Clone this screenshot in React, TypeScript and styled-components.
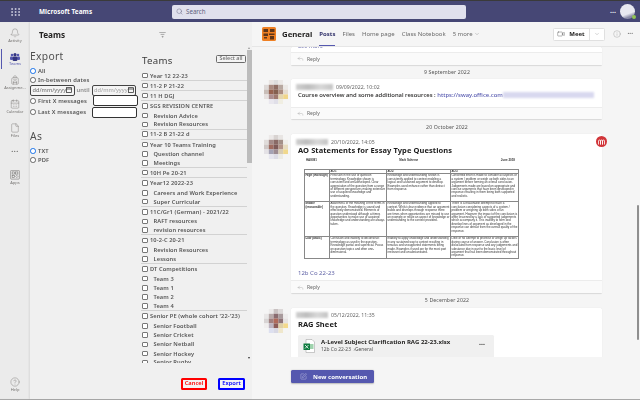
import React from "react";
import styled, { createGlobalStyle } from "styled-components";
import { Bell, CalendarDays, File, Search, Video, Info, ChevronDown, Reply, SquarePen, CircleHelp, Backpack } from "lucide-react";

const Global = createGlobalStyle`
  html, body { margin: 0; padding: 0; width: 640px; height: 400px; overflow: hidden; background: #f5f5f5; }
  #root { width: 640px; height: 400px; }
  * { box-sizing: border-box; }
  body { font-family: "Noto Sans", "Open Sans", sans-serif; color: #252423; }
`;

const Page = styled.div`
  width: 640px; height: 400px; display: flex; flex-direction: column;
  border-bottom: 1px solid #a8a8a8; filter: blur(.22px);
`;
const TitleBar = styled.header`
  height: 22px; flex: none; display: flex; align-items: center;
  background: #464775; border-top: 1px solid #3a3a3a; position: relative;
`;
const Waffle = styled.svg`width: 9px; height: 8px; margin-left: 11px; flex: none;`;
const Brand = styled.div`
  margin-left: 19px; width: 133px; color: #fff; font-size: 6.4px; font-weight: 700; letter-spacing: .05px;
`;
const SearchBox = styled.div`
  width: 294px; height: 14px; background: #e0e0ed; border-radius: 2px; display: flex; align-items: center;
  gap: 3px; padding-left: 4px; color: #63637f; font-size: 6.2px;
`;
const TitleDots = styled.div`
  margin-left: auto; margin-right: 4px; color: #fff; font-size: 7px; font-weight: 700; line-height: 1; margin-top: -3px;
`;
const UserAvatar = styled.div`
  width: 15px; height: 15px; border-radius: 50%; background: linear-gradient(160deg,#e8e8f0 0 62%,#8b8ca8 80%);
  margin-right: 5px; position: relative;
`;
const Presence = styled.span`
  position: absolute; right: -1px; bottom: 0; width: 4px; height: 4px; border-radius: 50%; background: #92c353;
`;

const Main = styled.div`flex: 1; min-height: 0; display: flex;`;

const Rail = styled.nav`
  width: 30px; flex: none; background: #ebebeb; display: flex; flex-direction: column; padding-top: 2px;
  box-shadow: inset -1px 0 2px rgba(0,0,0,.03);
`;
const RailItem = styled.div<{ $active?: boolean }>`
  height: 23.7px; flex: none; display: flex; flex-direction: column; align-items: center; justify-content: center;
  gap: 1px; position: relative; color: ${p => (p.$active ? "#5558af" : "#716f6d")};
  font-size: 4px; line-height: 4.5px; white-space: nowrap;
  ${p => p.$active && `&::before { content: ""; position: absolute; left: 1px; top: 1px; bottom: 2px; width: 1px; background: #5558af; }`}
`;
const RailSpacer = styled.div`flex: 1;`;
const RailHelp = styled(RailItem)`margin-bottom: 2px;`;
const RailDots = styled.div`font-size: 7px; font-weight: 700; color: #5f5e5c; letter-spacing: .5px; line-height: 1; margin-bottom: 9px;`;

const Panel = styled.aside`
  width: 222px; flex: none; background: #f0f0f0; display: flex; flex-direction: column; position: relative;
  box-shadow: -1px 0 2px rgba(0,0,0,.05);
`;
const PanelHead = styled.div`
  height: 25px; flex: none; display: flex; align-items: center; justify-content: space-between;
  padding: 0 86px 0 9px; font-size: 8.2px; font-weight: 700; color: #252423;
`;
const Exporter = styled.div`flex: 1; min-height: 0; display: flex; position: relative;`;
const OptionsCol = styled.div`width: 111px; flex: none; padding-top: 2px; color: #4d4d4d;`;
const BigHeading = styled.div`
  font-size: 10.3px; line-height: 14px; color: #505050; letter-spacing: .3px;
`;
const OptionRow = styled.label<{ $gap?: number }>`
  display: flex; align-items: center; height: 9.5px; font-size: 5.8px; font-weight: 600; color: #555;
  letter-spacing: .12px; margin-top: ${p => p.$gap ?? 0}px; white-space: nowrap; position: relative;
`;
const Radio = styled.span<{ $on?: boolean }>`
  width: 5.6px; height: 5.6px; border-radius: 50%; margin: 0 2px 0 .4px; flex: none; background: #fff;
  border: ${p => (p.$on ? "1.6px solid #1a73e8" : ".6px solid #666")};
`;
const DateLine = styled.div`
  display: flex; align-items: center; height: 10.5px; gap: 2px; font-size: 5.8px; color: #8a8a8a; font-weight: 600;
`;
const DateField = styled.div<{ $faint?: boolean }>`
  width: 44.5px; height: 10.5px; border: .7px solid #444; border-radius: 2px; display: flex; align-items: center;
  justify-content: space-between; padding: 0 1.5px; font-size: 5.6px; font-weight: 500; background: #f4f4f4;
  color: ${p => (p.$faint ? "#aaa" : "#777")};
`;
const CalIcon = styled.svg`width: 6px; height: 6px; flex: none;`;
const NumberField = styled.div<{ $left: number; $top: number }>`
  position: absolute; left: ${p => p.$left}px; top: ${p => p.$top}px; width: 44.5px; height: 11px;
  border: .8px solid #333; border-radius: 2px; background: #fff;
`;
const AsGap = styled.div`height: 12px;`;
const TeamsCol = styled.div`width: 106px; flex: none; display: flex; flex-direction: column; height: 316px;`;
const TeamsHead = styled.div`
  height: 24px; flex: none; display: flex; align-items: center; justify-content: space-between; padding-top: 3px;
`;
const SelectAll = styled.button`
  width: 30px; height: 8.5px; padding: 0; border: .7px solid #6b6b6b; border-radius: 1.5px; background: #f4f4f4;
  color: #777; font: 600 5.3px "Noto Sans", sans-serif; line-height: 1; margin-right: 1px; margin-top: -3px;
`;
const TeamsHeading = styled(BigHeading)`font-size: 9.6px; color: #3a3a3a; letter-spacing: .35px; padding-left: 1px;`;
const List = styled.div`flex: 1; min-height: 0; overflow: hidden;`;
const Line = styled.label<{ $rule?: boolean }>`
  display: flex; align-items: center; font-size: 5.7px; font-weight: 600; color: #555;
  letter-spacing: .1px; white-space: nowrap; border-bottom: ${p => (p.$rule ? ".7px solid #d2d2d2" : "none")};
`;
const TeamRow = styled(Line)`height: 10px;`;
const SubRow = styled(Line)`height: 9.3px;`;
const Box = styled.span<{ $sub?: boolean }>`
  width: 6px; height: 5.6px; border: .6px solid #777; border-radius: 1px; background: #fff; flex: none;
  margin: 0 ${p => (p.$sub ? 6 : 2.5)}px 0 .5px;
`;
const ScrollTrack = styled.div`
  width: 5px; flex: none; height: 316px; position: relative; background: #f0f0f0;
`;
const ScrollThumb = styled.div`position: absolute; top: 3px; left: 0; right: 0; height: 113px; background: #bcbcbc;`;
const Arrow = styled.span<{ $down?: boolean }>`
  position: absolute; left: .8px; ${p => (p.$down ? "top: 310px; border-top: 2px solid #333;" : "top: 0; border-bottom: 2px solid #999;")}
  border-left: 1.6px solid transparent; border-right: 1.6px solid transparent;
`;
const Actions = styled.div`
  position: absolute; right: 7px; bottom: 9px; display: flex; gap: 11px;
`;
const ActionButton = styled.button<{ $color: string; $w: number }>`
  width: ${p => p.$w}px; height: 12.5px; padding: 0; background: #f4f4f4; border: 2px solid ${p => p.$color};
  border-radius: 1.5px; color: ${p => p.$color}; font: 600 5.8px "Noto Sans", sans-serif; line-height: 1;
`;

const Chat = styled.section`flex: 1; min-width: 0; background: #f5f5f5; display: flex; flex-direction: column; position: relative;`;
const ChannelHead = styled.div`
  height: 25px; flex: none; display: flex; align-items: center; padding-left: 10px; position: relative;
  border-bottom: .5px solid #e6e6e6;
`;
const ChannelLogo = styled.svg`width: 14px; height: 14px; margin-right: 6px; flex: none;`;
const ChannelName = styled.div`font-size: 7.8px; font-weight: 700; margin-right: 7px;`;
const Tabs = styled.div`display: flex; align-items: center; height: 100%; gap: 7px; font-size: 6px; color: #6a6a6a;`;
const Tab = styled.div<{ $active?: boolean }>`
  height: 100%; display: flex; align-items: center; gap: 1px; position: relative;
  ${p => p.$active && `font-weight: 700; color: #33336b; &::after { content: ""; position: absolute; left: 0; right: 0; bottom: 0; height: 1px; background: #5558af; }`}
`;
const HeadRight = styled.div`margin-left: auto; display: flex; align-items: center; padding-right: 7px; color: #6a6a6a;`;
const MeetGroup = styled.div`
  width: 52px; height: 13px; display: flex; background: #fff; border: .5px solid #e0e0e0; border-radius: 1.5px;
  margin-right: 8px;
`;
const MeetMain = styled.div`
  flex: 1; display: flex; align-items: center; justify-content: center; gap: 4px; color: #252423; font-size: 6px; font-weight: 700;
  border-right: .5px solid #e0e0e0;
`;
const MeetCaret = styled.div`width: 14px; display: flex; align-items: center; justify-content: center; color: #777;`;
const HeadDots = styled.span`font-size: 6.5px; font-weight: 700; margin-left: 7px; line-height: 1; margin-top: -3px;`;

const Thread = styled.div`flex: 1; min-height: 0; overflow: hidden; display: flex; flex-direction: column;`;
const DateSep = styled.div<{ $h: number }>`
  height: ${p => p.$h}px; flex: none; display: flex; align-items: center; justify-content: center;
  width: 390px; font-size: 5.2px; color: #555; position: relative; letter-spacing: .1px;
`;
const MsgRow = styled.div`display: flex; flex: none; position: relative;`;
const AvatarSlot = styled.div<{ $top: number }>`width: 39px; flex: none; padding: ${p => p.$top}px 0 0 12px;`;
const Pixel = styled.svg`width: 24px; height: 24px; display: block; filter: blur(.7px);`;
const Card = styled.article`
  width: 311px; background: #fff; border-radius: 1.5px; box-shadow: 0 .5px 1px rgba(0,0,0,.12);
`;
const Clip = styled.div<{ $h: number }>`height: ${p => p.$h}px; overflow: hidden;`;
const SeeMore = styled.div`font-size: 5.6px; color: #6264a7; padding-left: 7px; margin-top: -5px; line-height: 8px; filter: blur(.2px);`;
const ReplyRow = styled.div`
  height: 12.5px; display: flex; align-items: center; gap: 3px; padding-left: 6px; font-size: 5px; color: #666;
  background: #fafafa; border-top: .5px solid #ececec;
`;
const Meta = styled.div`display: flex; align-items: center; height: 9px; margin-top: 3px; padding-left: 5px; gap: 3px;`;
const BlurName = styled.div<{ $w: number }>`
  width: ${p => p.$w}px; height: 6px; background: linear-gradient(90deg,#d0d0d0,#bdbdbd,#d8d8d8,#c4c4c4); filter: blur(.8px); flex: none;
`;
const Stamp = styled.div`font-size: 5.2px; color: #666;`;
const Body = styled.div`font-size: 5.9px; line-height: 8px; color: #252423; padding-left: 7px; height: 15.5px; white-space: nowrap; font-weight: 500;`;
const Link = styled.span`color: #5558af;`;
const BlurLink = styled.span`
  display: inline-block; width: 91px; height: 6px; background: #d8d8ef; filter: blur(1px); vertical-align: -1px;
`;
const Heading = styled.div`
  font-size: 7.5px; font-weight: 700; color: #1b1b1b; padding-left: 7px; line-height: 10px; white-space: nowrap; letter-spacing: .08px; margin-top: -1px;
`;
const Doc = styled.div`width: 215px; margin: 1px 0 0 13px; font-family: "Liberation Sans", Arial, sans-serif; font-size: 2.95px; line-height: 3.4px; color: #333;`;
const DocHead = styled.div`display: flex; justify-content: space-between; font-weight: 700; height: 9px; padding: 0 4px 0 2px; align-items: center; margin-bottom: 4px;`;
const DocTable = styled.table`
  width: 214px; height: 88px; border-collapse: collapse; table-layout: fixed;
  td, th { border: .5px solid #888; padding: 0 .5px; vertical-align: top; overflow: hidden; font-weight: 400; }
  th { font-weight: 700; height: 4px; text-align: left; }
  tbody tr:nth-child(1) { height: 28px; }
  tbody tr:nth-child(2) { height: 35px; }
  tbody tr:nth-child(3) { height: 21px; }
`;
const FirstCell = styled.td`&& { font-weight: 700; }`;
const ChannelRef = styled.div`font-size: 6px; color: #6264a7; padding: 11.5px 0 3px 7px; line-height: 7px; height: 21.5px;`;
const Badge = styled.div`
  position: absolute; left: 344px; top: 2px; width: 11px; height: 11px; border-radius: 50%; background: #d13438;
  display: flex; align-items: center; justify-content: center;
`;
const FileCard = styled.div`
  width: 196px; height: 24px; margin: 6px 0 0 7px; background: #f0f0f0; border-radius: 1.5px; display: flex; padding: 4px 0 0 5px; position: relative;
`;
const XlIcon = styled.svg`width: 12px; height: 14px; flex: none; margin-right: 6px;`;
const FileName = styled.div`font-size: 6px; font-weight: 700; line-height: 7px; color: #252423; letter-spacing: .03px; white-space: nowrap;`;
const FileSub = styled.div`font-size: 4.9px; line-height: 6px; color: #555;`;
const FileDots = styled.span`position: absolute; right: 9px; top: 3px; font-size: 7px; font-weight: 700;`;
const Composer = styled.div`height: 42px; flex: none; padding: 13px 0 0 39px;`;
const NewButton = styled.button`
  width: 83px; height: 13px; padding: 0 0 0 9px; border: 0; border-radius: 1.5px; background: #5558af; color: #fff;
  display: flex; align-items: center; gap: 6px; font: 700 6px "Noto Sans", sans-serif; box-shadow: 0 .5px 1.5px rgba(0,0,0,.25);
`;
const ChatThumb = styled.div`position: absolute; right: 1px; top: 183px; width: 2.5px; height: 135px; background: #8f8f8f; border-radius: 2px;`;

const palettes: string[][][] = [
  [
    ["#f5f5f5", "#e8e4e2", "#ddd", "#ece9e7", "#f5f5f5"],
    ["#ddd8d6", "#a98a80", "#8f6e64", "#b8a8a0", "#ece9e6"],
    ["#c9beb8", "#97624f", "#85604f", "#ad8e80", "#e5dcd0"],
    ["#e6e0de", "#ad8f90", "#a07a70", "#e4d6ae", "#f0d68a"],
    ["#f5f5f5", "#e9e7ee", "#e0dfe8", "#f0eee2", "#f5f5f5"],
  ],
  [
    ["#f5f5f5", "#ece9e8", "#d8d3d1", "#e8e5e3", "#f5f5f5"],
    ["#e0dcda", "#a48a88", "#8a6a66", "#a49088", "#f0eeea"],
    ["#cfc8c6", "#a06b60", "#7e5a58", "#b39488", "#e8dcc0"],
    ["#e4e2e6", "#a5a3b5", "#9d8c92", "#d8ccb4", "#f0d88c"],
    ["#f5f5f5", "#e6e6ef", "#dcdce6", "#ecebe4", "#f5f5f5"],
  ],
  [
    ["#f5f5f5", "#eceaea", "#c9c2c2", "#dcd8d8", "#f5f5f5"],
    ["#e8e6e6", "#b8aaaa", "#8a6c70", "#a89a9c", "#eeecec"],
    ["#d8d4d4", "#a08080", "#b06a5a", "#8f7478", "#e6e2e2"],
    ["#f0eeee", "#bdb4c0", "#8c5c58", "#dfd0a8", "#f3d98d"],
    ["#f5f5f5", "#dde0f0", "#d8d8e4", "#efe7cc", "#f5f5f5"],
  ],
];

const Avatar = ({ v }: { v: number }) => (
  <Pixel viewBox="0 0 25 25" aria-hidden>
    {palettes[v].flatMap((row, y) =>
      row.map((c, x) => <rect key={`${x}-${y}`} x={x * 5} y={y * 5} width="5.05" height="5.05" fill={c} />)
    )}
  </Pixel>
);

const Dots3x3 = () => (
  <Waffle viewBox="0 0 9 8" aria-hidden>
    {[0, 1, 2].flatMap(r =>
      [0, 1, 2].map(c => <rect key={`${r}${c}`} x={c * 3.5 + .3} y={r * 3 + .3} width="1.6" height="1.4" fill="#e8e8f4" />)
    )}
  </Waffle>
);

const RailTeams = () => (
  <svg width="10" height="8" viewBox="0 0 10 8" aria-hidden>
    <circle cx="2" cy="2" r="1.3" fill="#5558af" />
    <circle cx="8" cy="2" r="1.3" fill="#5558af" />
    <circle cx="5" cy="1.7" r="1.6" fill="#33357f" />
    <rect x="0" y="3.6" width="3" height="3.4" rx="1" fill="#5558af" />
    <rect x="7" y="3.6" width="3" height="3.4" rx="1" fill="#5558af" />
    <rect x="2.6" y="3.6" width="4.8" height="4.4" rx="1.2" fill="#33357f" />
  </svg>
);

const AppsIcon = () => (
  <svg width="10" height="9.5" viewBox="0 0 10 10" fill="none" stroke="#716f6d" strokeWidth=".6" aria-hidden>
    <rect x=".4" y=".4" width="9.2" height="9.2" rx=".8" />
    <rect x="2" y="2" width="2.3" height="2.3" />
    <rect x="5.7" y="2" width="2.3" height="2.3" />
    <rect x="2" y="5.7" width="2.3" height="2.3" />
    <path d="M5.7 6.8l1.2-1.2 1.2 1.2-1.2 1.2z" />
  </svg>
);

const Funnel = () => (
  <svg width="7" height="6" viewBox="0 0 7 6" fill="none" stroke="#777" strokeWidth=".6" aria-hidden>
    <path d="M.3.4h6.4M1.6 2.4h3.8M3 4.4h1.2L3.6 5.4z" />
  </svg>
);

const Cal = () => (
  <CalIcon viewBox="0 0 6 6" fill="none" stroke="#222" strokeWidth=".7" aria-hidden>
    <rect x=".4" y=".7" width="5.2" height="4.9" />
    <path d="M.4 2h5.2" />
  </CalIcon>
);

const teams: [string, string[]][] = [
  ["Year 12 22-23", []],
  ["11-2 P 21-22", []],
  ["11 H DGJ", []],
  ["SGS REVISION CENTRE", ["Revision Advice", "Revision Resources"]],
  ["11-2 B 21-22 d", []],
  ["Year 10 Teams Training", ["Question channel", "Meetings"]],
  ["10H Pe 20-21", []],
  ["Year12 2022-23", ["Careers and Work Experience", "Super Curricular"]],
  ["11C/Gr1 (German) - 2021/22", ["RAFT resources", "revision resources"]],
  ["10-2-C 20-21", ["Revision Resources", "Lessons"]],
  ["DT Competitions", ["Team 3", "Team 1", "Team 2", "Team 4"]],
  ["Senior PE (whole cohort '22-'23)", ["Senior Football", "Senior Cricket", "Senior Netball", "Senior Hockey", "Senior Rugby"]],
];

const rows = [
  [
    "High (thorough)",
    "Precision in the use of question terminology. Knowledge shown is consistent and well-developed. Clear appreciation of the question from a range of different perspectives making extensive use of acquired knowledge and understanding.",
    "Knowledge and understanding shown is consistently applied to context enabling a logical and sustained argument to develop. Examples used enhance rather than detract from response.",
    "Concerted effort is made to consider all aspects of a system / problem or weigh up both sides to an argument before forming an overall conclusion. Judgements made are based on appropriate and concise arguments that have been developed in response resulting in them being both supported and realistic.",
  ],
  [
    "Middle (reasonable)",
    "Awareness of the meaning of the terms in the question. Knowledge is sound and effectively demonstrated. Elements of question understood although at times opportunities to make use of acquired knowledge and understanding are always taken.",
    "Knowledge and understanding applied to context. Whilst clear evidence that an argument builds and develops through response there are times when opportunities are missed to use an example or relate an aspect of knowledge or understanding to the context provided.",
    "There is a reasonable attempt to reach a conclusion considering aspects of a system / problem or weighing up both sides of an argument. However the impact of the conclusion is often lessened by a lack of supported judgements which accompany it. This inability to form and develop lines of argument as developed in the response can detract from the overall quality of the response.",
  ],
  [
    "Low (basic)",
    "Confusion and inability to deconstruct terminology as used in the question. Knowledge partial and superficial. Focus on question topics and often one-dimensional.",
    "Inability to apply knowledge and understanding in any sustained way to context resulting in tenuous and unsupported statements being made. Examples if used are for the most part irrelevant and unsubstantiated.",
    "Little or no attempt to prioritise or weigh up factors during course of answer. Conclusion is often dislocated from response and any judgements and substance due in part to the basic level of argument that has been demonstrated throughout response.",
  ],
];

export default function App() {
  return (
    <Page>
      <Global />
      <TitleBar>
        <Dots3x3 />
        <Brand>Microsoft Teams</Brand>
        <SearchBox>
          <Search size={7} strokeWidth={1.5} />
          Search
        </SearchBox>
        <TitleDots>...</TitleDots>
        <UserAvatar>
          <Presence />
        </UserAvatar>
      </TitleBar>
      <Main>
        <Rail>
          <RailItem><Bell size={10} strokeWidth={1} />Activity</RailItem>
          <RailItem $active><RailTeams />Teams</RailItem>
          <RailItem><Backpack size={10} strokeWidth={1} />Assignme...</RailItem>
          <RailItem><CalendarDays size={10} strokeWidth={1} />Calendar</RailItem>
          <RailItem><File size={10} strokeWidth={1} />Files</RailItem>
          <RailItem><RailDots>...</RailDots></RailItem>
          <RailItem><AppsIcon />Apps</RailItem>
          <RailSpacer />
          <RailHelp><CircleHelp size={10} strokeWidth={1} />Help</RailHelp>
        </Rail>
        <Panel>
          <PanelHead>Teams<Funnel /></PanelHead>
          <Exporter>
            <OptionsCol>
              <BigHeading>Export</BigHeading>
              <OptionRow $gap={3}><Radio $on />All</OptionRow>
              <OptionRow><Radio />In-between dates</OptionRow>
              <DateLine>
                <DateField>dd/mm/yyyy<Cal /></DateField>
                until
                <DateField $faint>dd/mm/yyyy<Cal /></DateField>
              </DateLine>
              <OptionRow $gap={1}><Radio />First X messages</OptionRow>
              <OptionRow $gap={1.5}><Radio />Last X messages</OptionRow>
              <NumberField $left={63} $top={48} />
              <NumberField $left={62} $top={59.5} />
              <AsGap />
              <BigHeading>As</BigHeading>
              <OptionRow $gap={3}><Radio $on />TXT</OptionRow>
              <OptionRow><Radio />PDF</OptionRow>
            </OptionsCol>
            <TeamsCol>
              <TeamsHead>
                <TeamsHeading>Teams</TeamsHeading>
                <SelectAll>Select all</SelectAll>
              </TeamsHead>
              <List>
                {teams.map(([team, subs], i) => (
                  <React.Fragment key={i}>
                    <TeamRow $rule={subs.length === 0}><Box />{team}</TeamRow>
                    {subs.map((s, j) => (
                      <SubRow key={s} $rule={j === subs.length - 1}><Box $sub />{s}</SubRow>
                    ))}
                  </React.Fragment>
                ))}
              </List>
            </TeamsCol>
            <ScrollTrack>
              <ScrollThumb />
              <Arrow />
              <Arrow $down />
            </ScrollTrack>
            <Actions>
              <ActionButton $color="#f00" $w={26}>Cancel</ActionButton>
              <ActionButton $color="#00f" $w={27}>Export</ActionButton>
            </Actions>
          </Exporter>
        </Panel>
        <Chat>
          <ChannelHead>
            <ChannelLogo viewBox="0 0 14 14" aria-hidden>
              <rect width="14" height="14" rx="1.5" fill="#ef8023" />
              <g fill="#3a2418" opacity=".8">
                <rect x="1.5" y="2" width="4.5" height="3" />
                <rect x="8" y="2" width="4.5" height="3" />
                <rect x="1.5" y="6.5" width="4.5" height="2.5" />
                <rect x="7" y="6.5" width="5.5" height="1.5" />
                <rect x="2" y="10" width="3" height="1.5" />
                <rect x="8" y="9" width="4" height="3.5" />
              </g>
            </ChannelLogo>
            <ChannelName>General</ChannelName>
            <Tabs>
              <Tab $active>Posts</Tab>
              <Tab>Files</Tab>
              <Tab>Home page</Tab>
              <Tab>Class Notebook</Tab>
              <Tab>5 more<ChevronDown size={6} strokeWidth={1.2} /></Tab>
            </Tabs>
            <HeadRight>
              <MeetGroup>
                <MeetMain><Video size={8} strokeWidth={1} />Meet</MeetMain>
                <MeetCaret><ChevronDown size={6} strokeWidth={1.2} /></MeetCaret>
              </MeetGroup>
              <Info size={8} strokeWidth={.8} />
              <HeadDots>...</HeadDots>
            </HeadRight>
          </ChannelHead>
          <Thread>
            <MsgRow>
              <AvatarSlot $top={0} />
              <Card>
                <Clip $h={5}><SeeMore>See more</SeeMore></Clip>
                <ReplyRow><Reply size={7} strokeWidth={.8} />Reply</ReplyRow>
              </Card>
            </MsgRow>
            <DateSep $h={14.5}>9 September 2022</DateSep>
            <MsgRow>
              <AvatarSlot $top={1}><Avatar v={0} /></AvatarSlot>
              <Card>
                <Meta><BlurName $w={37} /><Stamp>09/09/2022, 10:02</Stamp></Meta>
                <Body>Course overview and some additional resources : <Link>https://sway.office.com</Link><BlurLink /></Body>
                <ReplyRow><Reply size={7} strokeWidth={.8} />Reply</ReplyRow>
              </Card>
            </MsgRow>
            <DateSep $h={15}>20 October 2022</DateSep>
            <MsgRow>
              <AvatarSlot $top={1}><Avatar v={1} /></AvatarSlot>
              <Card>
                <Meta><BlurName $w={32} /><Stamp>20/10/2022, 14:05</Stamp></Meta>
                <Heading>AO Statements for Essay Type Questions</Heading>
                <Doc>
                  <DocHead><span>HA8091</span><span>Mark Scheme</span><span>June 2018</span></DocHead>
                  <DocTable>
                    <colgroup><col width="25" /><col width="57" /><col width="64" /><col width="68" /></colgroup>
                    <thead><tr><th /><th>AO1</th><th>AO2</th><th>AO3</th></tr></thead>
                    <tbody>
                      {rows.map(r => (
                        <tr key={r[0]}>
                          <FirstCell>{r[0]}</FirstCell>
                          <td>{r[1]}</td><td>{r[2]}</td><td>{r[3]}</td>
                        </tr>
                      ))}
                    </tbody>
                  </DocTable>
                </Doc>
                <ChannelRef>12b Co 22-23</ChannelRef>
                <ReplyRow><Reply size={7} strokeWidth={.8} />Reply</ReplyRow>
              </Card>
              <Badge>
                <svg width="7" height="6" viewBox="0 0 7 6" fill="none" stroke="#fff" strokeWidth=".8" aria-hidden>
                  <path d="M.5 5.5V2a1 1 0 0 1 2 0v3.5M2.5 5.5V2a1 1 0 0 1 2 0v3.5M4.5 5.5V2a1 1 0 0 1 2 0v3.5" />
                </svg>
              </Badge>
            </MsgRow>
            <DateSep $h={15}>5 December 2022</DateSep>
            <MsgRow>
              <AvatarSlot $top={1}><Avatar v={2} /></AvatarSlot>
              <Card>
                <Meta><BlurName $w={32} /><Stamp>05/12/2022, 11:35</Stamp></Meta>
                <Heading>RAG Sheet</Heading>
                <FileCard>
                  <XlIcon viewBox="0 0 12 14" aria-hidden>
                    <path d="M3 .5h6l2.5 2.5v10.5H3z" fill="#fff" stroke="#999" strokeWidth=".5" />
                    <rect x="7" y="5" width="3.5" height="5" fill="#9fd3ad" />
                    <rect x=".5" y="4.5" width="6.5" height="6.5" fill="#107c41" />
                    <path d="M2 6l3.5 3.5M5.5 6L2 9.5" stroke="#fff" strokeWidth=".8" />
                  </XlIcon>
                  <div>
                    <FileName>A-Level Subject Clarification RAG 22-23.xlsx</FileName>
                    <FileSub>12b Co 22-23 &nbsp;›General</FileSub>
                  </div>
                  <FileDots>...</FileDots>
                </FileCard>
              </Card>
            </MsgRow>
          </Thread>
          <Composer>
            <NewButton><SquarePen size={7} strokeWidth={1} />New conversation</NewButton>
          </Composer>
          <ChatThumb />
        </Chat>
      </Main>
    </Page>
  );
}
